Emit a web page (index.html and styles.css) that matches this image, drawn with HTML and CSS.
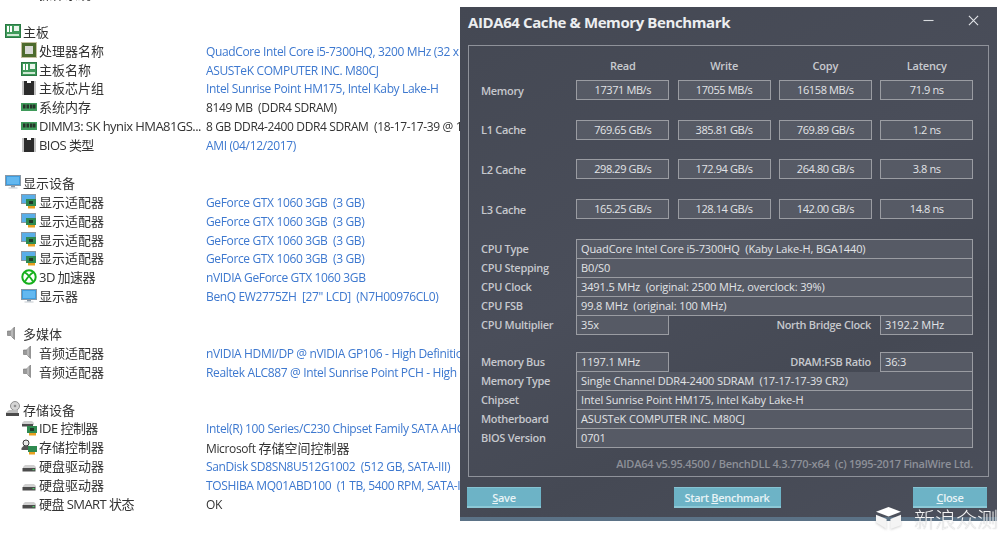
FILE: index.html
```html
<!DOCTYPE html>
<html lang="zh-CN">
<head>
<meta charset="utf-8">
<title>AIDA64 Cache &amp; Memory Benchmark</title>
<link rel="stylesheet" href="styles.css">
</head>
<body>
<svg class="defs" width="0" height="0" aria-hidden="true">
  <symbol id="board" viewBox="0 0 16 16"><rect x="0.500" y="1.500" width="15" height="13" fill="#3f9a5a" stroke="#2a7a44"/><rect x="2" y="3" width="2" height="6" fill="#fff"/><rect x="5" y="3" width="2" height="6" fill="#fff"/><rect x="9" y="3" width="5" height="5" fill="#eaf5ec"/><rect x="2" y="11" width="12" height="2" fill="#cfe8d4"/></symbol>
  <symbol id="cpu" viewBox="0 0 16 16"><rect x="1" y="1" width="14" height="14" fill="#4d6b2d"/><rect x="0.500" y="0.500" width="15" height="15" fill="none" stroke="#8a8040" stroke-dasharray="1 1"/><rect x="4" y="4" width="8" height="8" fill="#d9d9d6"/></symbol>
  <symbol id="chip" viewBox="0 0 16 16"><rect x="3" y="1" width="10" height="14" fill="#2b2b2b"/><path d="M1 2h2M1 4h2M1 6h2M1 8h2M1 10h2M1 12h2M1 14h2M13 2h2M13 4h2M13 6h2M13 8h2M13 10h2M13 12h2M13 14h2" stroke="#8a8a8a"/><path d="M6 1h4v2H6z" fill="#fff"/></symbol>
  <symbol id="ram" viewBox="0 0 16 16"><rect x="0" y="4" width="16" height="8" fill="#3f9a5a"/><path d="M2 5.500h2.500v4H2zM5.500 5.500H8v4H5.500zM9 5.500h2.500v4H9zM12 5.500h2.500v4H12z" fill="#26342a"/></symbol>
  <symbol id="monitor" viewBox="0 0 16 16"><rect x="0.500" y="1.500" width="15" height="10" fill="#3f9ddf" stroke="#8a98a5"/><rect x="2" y="3" width="12" height="7" fill="#63b8f0"/><rect x="6" y="12" width="4" height="1.500" fill="#8a98a5"/><rect x="3.500" y="13.500" width="9" height="1" fill="#c3cad0"/></symbol>
  <symbol id="adapter" viewBox="0 0 16 16"><rect x="0.500" y="1.500" width="14" height="9" fill="#59aee8" stroke="#8a98a5"/><rect x="5" y="6" width="10" height="7" fill="#2f8a50"/><rect x="8" y="8" width="4" height="3" fill="#1f3a28"/><rect x="7" y="13" width="7" height="2.500" fill="#e8a020"/></symbol>
  <symbol id="xbox" viewBox="0 0 16 16"><circle cx="8" cy="8" r="6.700" fill="#fff" stroke="#16b01c" stroke-width="2"/><path d="M4 3.500 Q8 6 12 12.500M12 3.500 Q8 6 4 12.500" fill="none" stroke="#16b01c" stroke-width="1.800"/></symbol>
  <symbol id="speaker" viewBox="0 0 16 16"><path d="M2.500 6h3l4-4v12.500l-4-4h-3z" fill="#9a9a9a" stroke="#6f6f6f" stroke-width="0.600"/><path d="M7 4v8" stroke="#d5d5d5"/></symbol>
  <symbol id="storage" viewBox="0 0 16 16"><circle cx="10" cy="5" r="4.500" fill="#d5d5d5" stroke="#8f8f8f"/><circle cx="10" cy="5" r="1.300" fill="#8f8f8f"/><path d="M1 11.500 4 9h9v4H1z" fill="#bdbdbd"/><rect x="1" y="12" width="13" height="3" fill="#4a4a4a"/></symbol>
  <symbol id="hdd" viewBox="0 0 16 16"><path d="M2 9l2-2h9l2 2v1H2z" fill="#d0d0d0"/><rect x="1.500" y="10" width="13" height="3.500" fill="#4c4c4c"/><rect x="11.500" y="11" width="2" height="1.200" fill="#4fd06a"/></symbol>
  <symbol id="ide" viewBox="0 0 16 16"><path d="M1 3l2-2h8l2 2v2H1z" fill="#cfcfcf"/><rect x="1" y="4" width="11" height="2.500" fill="#4c4c4c"/><rect x="6" y="6" width="10" height="7" fill="#2f8a50"/><rect x="9" y="8" width="4" height="3" fill="#1f3a28"/><rect x="8" y="13" width="7" height="2.500" fill="#e8a020"/></symbol>
  <symbol id="ctrl" viewBox="0 0 16 16"><circle cx="5" cy="4" r="3" fill="#e8e8e8" stroke="#3a3a3a"/><path d="M0.500 9l2-2h5l1 2v2H0.500z" fill="#555"/><rect x="7" y="7" width="9" height="6" fill="#2f8a50"/><rect x="8" y="13" width="6" height="2.500" fill="#e8a020"/></symbol>
</svg>

<main class="tree">
  <div class="row sub"><svg class="ico"><use href="#monitor"/></svg><span class="name">操作系统</span><span class="val plain"></span></div>
  <div class="row blank"></div>
  <div class="row head"><svg class="ico"><use href="#board"/></svg><span class="name">主板</span></div>
  <div class="row sub"><svg class="ico"><use href="#cpu"/></svg><span class="name">处理器名称</span><span class="val">QuadCore Intel Core i5-7300HQ, 3200 MHz (32 x 100)</span></div>
  <div class="row sub"><svg class="ico"><use href="#board"/></svg><span class="name">主板名称</span><span class="val">ASUSTeK COMPUTER INC. M80CJ</span></div>
  <div class="row sub"><svg class="ico"><use href="#chip"/></svg><span class="name">主板芯片组</span><span class="val">Intel Sunrise Point HM175, Intel Kaby Lake-H</span></div>
  <div class="row sub"><svg class="ico"><use href="#ram"/></svg><span class="name">系统内存</span><span class="val plain">8149 MB  (DDR4 SDRAM)</span></div>
  <div class="row sub"><svg class="ico"><use href="#ram"/></svg><span class="name mix">DIMM3: SK hynix HMA81GS...</span><span class="val plain">8 GB DDR4-2400 DDR4 SDRAM  (18-17-17-39 @ 1200 MHz)</span></div>
  <div class="row sub"><svg class="ico"><use href="#chip"/></svg><span class="name mix">BIOS 类型</span><span class="val">AMI (04/12/2017)</span></div>
  <div class="row blank"></div>
  <div class="row head"><svg class="ico"><use href="#monitor"/></svg><span class="name">显示设备</span></div>
  <div class="row sub"><svg class="ico"><use href="#adapter"/></svg><span class="name">显示适配器</span><span class="val">GeForce GTX 1060 3GB  (3 GB)</span></div>
  <div class="row sub"><svg class="ico"><use href="#adapter"/></svg><span class="name">显示适配器</span><span class="val">GeForce GTX 1060 3GB  (3 GB)</span></div>
  <div class="row sub"><svg class="ico"><use href="#adapter"/></svg><span class="name">显示适配器</span><span class="val">GeForce GTX 1060 3GB  (3 GB)</span></div>
  <div class="row sub"><svg class="ico"><use href="#adapter"/></svg><span class="name">显示适配器</span><span class="val">GeForce GTX 1060 3GB  (3 GB)</span></div>
  <div class="row sub"><svg class="ico"><use href="#xbox"/></svg><span class="name mix">3D 加速器</span><span class="val">nVIDIA GeForce GTX 1060 3GB</span></div>
  <div class="row sub"><svg class="ico"><use href="#monitor"/></svg><span class="name">显示器</span><span class="val">BenQ EW2775ZH  [27&quot; LCD]  (N7H00976CL0)</span></div>
  <div class="row blank"></div>
  <div class="row head"><svg class="ico"><use href="#speaker"/></svg><span class="name">多媒体</span></div>
  <div class="row sub"><svg class="ico"><use href="#speaker"/></svg><span class="name">音频适配器</span><span class="val">nVIDIA HDMI/DP @ nVIDIA GP106 - High Definition Audio</span></div>
  <div class="row sub"><svg class="ico"><use href="#speaker"/></svg><span class="name">音频适配器</span><span class="val">Realtek ALC887 @ Intel Sunrise Point PCH - High Definition</span></div>
  <div class="row blank"></div>
  <div class="row head"><svg class="ico"><use href="#storage"/></svg><span class="name">存储设备</span></div>
  <div class="row sub"><svg class="ico"><use href="#ide"/></svg><span class="name mix">IDE 控制器</span><span class="val">Intel(R) 100 Series/C230 Chipset Family SATA AHCI</span></div>
  <div class="row sub"><svg class="ico"><use href="#ctrl"/></svg><span class="name">存储控制器</span><span class="val plain">Microsoft <span class="cjk">存储空间控制器</span></span></div>
  <div class="row sub"><svg class="ico"><use href="#hdd"/></svg><span class="name">硬盘驱动器</span><span class="val">SanDisk SD8SN8U512G1002  (512 GB, SATA-III)</span></div>
  <div class="row sub"><svg class="ico"><use href="#hdd"/></svg><span class="name">硬盘驱动器</span><span class="val">TOSHIBA MQ01ABD100  (1 TB, 5400 RPM, SATA-III)</span></div>
  <div class="row sub"><svg class="ico"><use href="#hdd"/></svg><span class="name mix">硬盘 SMART 状态</span><span class="val plain">OK</span></div>
</main>

<section class="window">
  <header class="titlebar">
    <h1 class="title">AIDA64 Cache &amp; Memory Benchmark</h1>
    <div class="controls">
      <svg class="ctl" viewBox="0 0 12 12"><path d="M0.500 6h11" stroke="#d8dade" stroke-width="1.200"/></svg>
      <svg class="ctl" viewBox="0 0 12 12"><path d="M1 1l10 10M11 1L1 11" stroke="#e2e4e8" stroke-width="1.200"/></svg>
    </div>
  </header>
  <div class="panel">
    <div class="grid">
      <span></span><span class="col">Read</span><span class="col">Write</span><span class="col">Copy</span><span class="col">Latency</span>
    </div>
    <div class="speeds">
      <div class="grid"><span class="lbl">Memory</span><span class="box">17371 MB/s</span><span class="box">17055 MB/s</span><span class="box">16158 MB/s</span><span class="box">71.9 ns</span></div>
      <div class="grid"><span class="lbl">L1 Cache</span><span class="box">769.65 GB/s</span><span class="box">385.81 GB/s</span><span class="box">769.89 GB/s</span><span class="box">1.2 ns</span></div>
      <div class="grid"><span class="lbl">L2 Cache</span><span class="box">298.29 GB/s</span><span class="box">172.94 GB/s</span><span class="box">264.80 GB/s</span><span class="box">3.8 ns</span></div>
      <div class="grid"><span class="lbl">L3 Cache</span><span class="box">165.25 GB/s</span><span class="box">128.14 GB/s</span><span class="box">142.00 GB/s</span><span class="box">14.8 ns</span></div>
    </div>
    <div class="info cpu-info">
      <div class="irow"><span class="lbl">CPU Type</span><span class="ival">QuadCore Intel Core i5-7300HQ  (Kaby Lake-H, BGA1440)</span></div>
      <div class="irow"><span class="lbl">CPU Stepping</span><span class="ival">B0/S0</span></div>
      <div class="irow"><span class="lbl">CPU Clock</span><span class="ival">3491.5 MHz  (original: 2500 MHz, overclock: 39%)</span></div>
      <div class="irow"><span class="lbl">CPU FSB</span><span class="ival">99.8 MHz  (original: 100 MHz)</span></div>
      <div class="irow split"><span class="lbl">CPU Multiplier</span><span class="ival short">35x</span><span class="lbl right">North Bridge Clock</span><span class="ival short">3192.2 MHz</span></div>
    </div>
    <div class="info mem-info">
      <div class="irow split"><span class="lbl">Memory Bus</span><span class="ival short top">1197.1 MHz</span><span class="lbl right">DRAM:FSB Ratio</span><span class="ival short top">36:3</span></div>
      <div class="irow"><span class="lbl">Memory Type</span><span class="ival">Single Channel DDR4-2400 SDRAM  (17-17-17-39 CR2)</span></div>
      <div class="irow"><span class="lbl">Chipset</span><span class="ival">Intel Sunrise Point HM175, Intel Kaby Lake-H</span></div>
      <div class="irow"><span class="lbl">Motherboard</span><span class="ival">ASUSTeK COMPUTER INC. M80CJ</span></div>
      <div class="irow"><span class="lbl">BIOS Version</span><span class="ival">0701</span></div>
    </div>
    <p class="version">AIDA64 v5.95.4500 / BenchDLL 4.3.770-x64  (c) 1995-2017 FinalWire Ltd.</p>
  </div>
  <footer class="actions">
    <button class="btn" type="button"><u>S</u>ave</button>
    <button class="btn wide" type="button">Start <u>B</u>enchmark</button>
    <button class="btn" type="button"><u>C</u>lose</button>
  </footer>
</section>

<div class="mark">
  <svg class="cube" viewBox="0 0 28 26"><path d="M14 1l13 5-13 5L1 6z" fill="#fff"/><path d="M1 9l11 4.500v10.500L1 17z" fill="#f4f4f4"/><path d="M27 9l-11 4.500V24l11-4z" fill="#f4f4f4"/></svg>
  <span class="mark-text">新浪众测</span>
</div>
</body>
</html>
```
FILE: styles.css
```css
* { box-sizing: border-box; }
html, body { margin: 0; height: 100%; }
body {
  width: 1000px;
  height: 533px;
  overflow: hidden;
  position: relative;
  background: #fff;
  font-family: "Open Sans", "Noto Sans CJK SC", sans-serif;
  filter: blur(0.35px);
}
.defs { position: absolute; }

.tree { margin-top: -16px; padding-left: 5px; font-size: 13px; color: #333; }
.row { display: flex; align-items: center; height: 18.9px; white-space: pre; }
.ico { width: 16px; height: 16px; flex: none; }
.head .name { margin-left: 2px; }
.sub { padding-left: 16px; }
.sub .ico { margin-right: 2px; }
.sub .name { width: 167px; flex: none; overflow: hidden; }
.sub .name.mix { letter-spacing: -0.55px; }
.val { color: #3d78cf; font-size: 12px; letter-spacing: -0.36px; margin-top: 2px; }
.val.plain { color: #333; }
.cjk { font-size: 13px; letter-spacing: 0; }

.window {
  position: absolute;
  left: 460px;
  top: 7px;
  width: 537px;
  height: 514px;
  padding: 0 8px;
  display: flex;
  flex-direction: column;
  color: #d6d8dc;
  font-size: 11px;
  background:
    linear-gradient(to top, #5b7286 0, #5b7286 4px, transparent 4px),
    linear-gradient(155deg, #444853 0%, #4a4e5a 45%, #454954 70%, #4b4f5b 100%);
}
.titlebar { height: 38px; display: flex; align-items: center; justify-content: space-between; flex: none; padding-bottom: 8px; }
.title { margin: 0; font-size: 15px; font-weight: 700; letter-spacing: -0.4px; color: #eceef0; }
.controls { display: flex; gap: 34px; margin: 0 10px 4px 0; }
.ctl { width: 11px; height: 11px; }

.panel { height: 432px; border: 1px solid #8f929a; padding: 0 13px 0 12px; flex: none; display: flex; flex-direction: column; }
.grid { display: grid; grid-template-columns: 87px repeat(4, 93px); column-gap: 8.3px; align-items: center; }
.col { text-align: center; height: 34px; line-height: 39px; color: #c8cacf; font-weight: 600; letter-spacing: -0.2px; }
.lbl { color: #c6c8cd; font-weight: 600; letter-spacing: -0.3px; }
.speeds { display: flex; flex-direction: column; gap: 19.7px; }
.box {
  height: 20px;
  line-height: 18px;
  text-align: center;
  border: 1px solid #9a9ca2;
  background: #565a65;
  color: #e2e4e7;
  letter-spacing: -0.4px;
}
.info { display: flex; flex-direction: column; }
.cpu-info { margin-top: 20px; }
.mem-info { margin-top: 17px; }
.irow { display: grid; grid-template-columns: 95px 397px; height: 19px; align-items: stretch; }
.irow .lbl { line-height: 17px; }
.irow:first-child .lbl { line-height: 19px; }
.ival {
  border: 1px solid #9a9ca2;
  border-top: 0;
  background: #565a65;
  padding-left: 4px;
  color: #e2e4e7;
  white-space: pre;
  line-height: 18px;
  letter-spacing: -0.12px;
}
.cpu-info .irow:first-child { height: 20px; }
.cpu-info .irow:first-child .ival { border-top: 1px solid #9a9ca2; }
.irow.split { grid-template-columns: 95px 93px 211px 93px; }
.right { text-align: right; padding-right: 9px; }
.mem-info .irow:first-child { height: 20px; }
.ival.top { border-top: 1px solid #9a9ca2; }
.version { margin: 8px 0 0; padding-right: 2px; text-align: right; white-space: pre; font-weight: 600; letter-spacing: -0.24px; color: #8d9098; }

.actions { display: flex; justify-content: space-between; margin: 10px 2px 0 -1px; }
.btn {
  width: 74px;
  height: 21px;
  padding: 0;
  border: 0;
  border-top: 1px solid #86c3d2;
  border-bottom: 2px solid #8cc8d6;
  background: #6db3c6;
  color: #e8f3f6;
  font: 600 11px "Open Sans", sans-serif;
  letter-spacing: -0.3px;
}
.btn.wide { width: 107px; }

.mark {
  position: absolute;
  left: 875px;
  top: 503px;
  display: flex;
  align-items: center;
  gap: 12px;
  white-space: nowrap;
}
.cube { width: 27px; height: 25px; flex: none; filter: drop-shadow(0 1px 1px rgba(110, 110, 110, 0.3)); }
.mark-text { font-size: 21px; font-weight: 300; color: #f2f3f4; text-shadow: 0 0 1px rgba(100, 100, 100, 0.45); }
```
